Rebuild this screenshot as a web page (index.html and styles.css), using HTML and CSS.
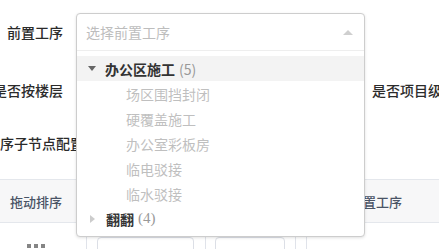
FILE: index.html
```html
<!DOCTYPE html>
<html lang="zh">
<head>
<meta charset="utf-8">
<link rel="stylesheet" href="styles.css">
</head>
<body>
<div class="page">
  <div class="form-item item-1">
    <div class="label">前置工序</div>
  </div>
  <div class="form-item item-2">
    <div class="label">是否按楼层</div>
    <div class="control"></div>
    <div class="label-right">是否项目级</div>
  </div>
  <div class="form-item item-3">
    <div class="label label-long">工序子节点配置</div>
  </div>

  <div class="table">
    <div class="thead">
      <div class="th th-drag">拖动排序</div>
      <div class="th th-mid"></div>
      <div class="th th-pre">前置工序</div>
    </div>
    <div class="trow">
      <div class="td td-drag"><span class="dots"><i></i><i></i><i></i></span></div>
      <div class="td td-a"><div class="box box-a"></div></div>
      <div class="td td-b"><div class="box box-b"></div><div class="line-b"></div></div>
      <div class="td td-c"></div>
    </div>
  </div>

  <div class="dropdown">
    <div class="dd-input">
      <span class="placeholder">选择前置工序</span>
      <span class="arrow-up"></span>
    </div>
    <ul class="dd-list">
      <li class="opt opt-hover"><span class="caret-down"></span><b>办公区施工</b><span class="count">(5)</span></li>
      <li class="opt child">场区围挡封闭</li>
      <li class="opt child">硬覆盖施工</li>
      <li class="opt child">办公室彩板房</li>
      <li class="opt child">临电驳接</li>
      <li class="opt child">临水驳接</li>
      <li class="opt"><span class="caret-right"></span><b>翻翻</b><span class="count serif">(4)</span></li>
    </ul>
  </div>
</div>
</body>
</html>
```

FILE: styles.css
```css
html, body {
  margin: 0;
  padding: 0;
  background: #fff;
  overflow: hidden;
}
body {
  width: 439px;
  height: 249px;
  font-family: "Noto Sans CJK SC", "Noto Sans", sans-serif;
  font-size: 14px;
  color: #333;
}
.page {
  position: relative;
  width: 439px;
  height: 249px;
  overflow: hidden;
  padding-top: 12px;
  box-sizing: border-box;
}
.form-item {
  display: flex;
  align-items: center;
  height: 40px;
}
.item-2 { margin-top: 18px; }
.item-3 { margin-top: 13px; }
.label {
  width: 63px;
  flex: none;
  display: flex;
  justify-content: flex-end;
  white-space: nowrap;
  color: #2b2b2b;
  font-weight: 500;
}
.label-long { width: 84px; }
.control { width: 309px; flex: none; }
.label-right { white-space: nowrap; color: #2b2b2b; font-weight: 500; }

.table {
  margin-top: 16px;
  width: 460px;
}
.thead {
  display: flex;
  height: 42px;
  background: #f7f7f8;
  border-top: 1px solid #e4e7ec;
  border-bottom: 1px solid #e4e7ec;
  font-size: 13px;
  color: #4a5466;
  font-weight: 500;
}
.th {
  display: flex;
  align-items: center;
}
.th-drag {
  width: 86px;
  padding-right: 14px;
  box-sizing: border-box;
  justify-content: center;
}
.th-mid { width: 220px; }
.th-pre { width: 140px; justify-content: center; }

.trow {
  display: flex;
  height: 40px;
}
.td {
  box-sizing: border-box;
  position: relative;
}
.td-drag {
  width: 86px;
  padding-right: 14px;
  display: flex;
  justify-content: center;
  padding-top: 21px;
}
.dots { display: flex; gap: 3px; }
.dots i {
  display: block;
  width: 4px;
  height: 4px;
  background: #858585;
}
.td-a {
  width: 119px;
  border-left: 1px solid #e0e3ea;
  padding: 14px 0 0 10px;
}
.td-b {
  width: 101px;
  border-left: 1px solid #e0e3ea;
  padding: 14px 0 0 9px;
  display: flex;
  align-items: flex-start;
}
.td-c {
  width: 140px;
  border-left: 1px solid #e0e3ea;
}
.box {
  height: 30px;
  border: 1px solid #dcdfe6;
  border-radius: 4px;
  box-sizing: border-box;
}
.box-a { width: 97px; }
.box-b { width: 70px; }
.line-b {
  width: 1px;
  height: 40px;
  margin-top: -14px;
  margin-left: 10px;
  background: #e0e3ea;
}

.dropdown {
  position: absolute;
  left: 76px;
  top: 13px;
  width: 289px;
  height: 224px;
  box-sizing: border-box;
  background: #fff;
  border: 1px solid #cdcdcd;
  border-radius: 4px;
  box-shadow: 0 1px 3px rgba(0, 0, 0, 0.12);
}
.dd-input {
  height: 36px;
  border-bottom: 1px solid #eee;
  display: flex;
  align-items: center;
  padding: 0 10px 0 9px;
}
.placeholder {
  color: #bdbdbd;
  flex: 1;
}
.arrow-up {
  width: 0;
  height: 0;
  border-left: 5px solid transparent;
  border-right: 5px solid transparent;
  border-bottom: 5px solid #cfcfcf;
  margin-right: 1px;
}
.dd-list {
  list-style: none;
  margin: 0;
  padding: 5px 0 0 0;
}
.opt {
  height: 25px;
  display: flex;
  align-items: center;
  padding-left: 29px;
  white-space: nowrap;
}
.opt b { font-weight: 700; color: #333; }
.opt-hover { background: #f3f3f3; }
.caret-down {
  width: 0;
  height: 0;
  border-left: 4.5px solid transparent;
  border-right: 4.5px solid transparent;
  border-top: 5px solid #666;
  margin-left: -18px;
  margin-right: 9px;
}
.caret-right {
  width: 0;
  height: 0;
  border-top: 4.5px solid transparent;
  border-bottom: 4.5px solid transparent;
  border-left: 5px solid #ccc;
  margin-left: -16px;
  margin-right: 11px;
}
.count {
  color: #999;
  margin-left: 4px;
}
.serif { font-family: "Liberation Serif", serif; font-size: 15px; }
.child {
  padding-left: 49px;
  color: #bfbfbf;
}
```
